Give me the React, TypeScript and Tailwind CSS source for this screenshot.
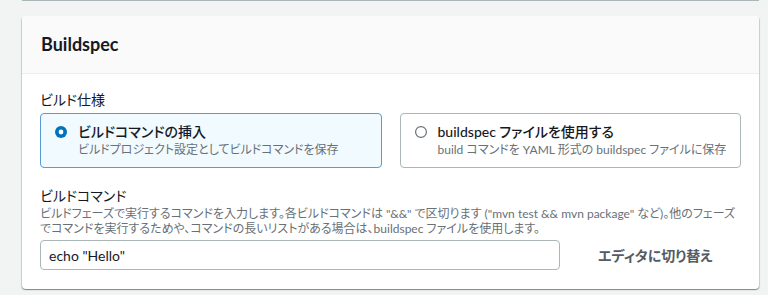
import React from 'react';

const FONT = { fontFamily: 'Lato, "Noto Sans CJK JP", sans-serif' };

interface TileProps {
  title: string;
  description: string;
  selected: boolean;
}

const RadioTile: React.FC<TileProps> = ({ title, description, selected }) => {
  return (
    <div
      className={`flex items-start gap-[11px] rounded-sm border pl-[14px] pr-3 pt-[8px] pb-[9px] ${
        selected ? 'border-[#5b9bd5] bg-[#f1faff]' : 'border-[#aab7b8] bg-white'
      }`}
    >
      <svg width="12" height="12" viewBox="0 0 12 12" className="mt-[4px] shrink-0">
        {selected ? (
          <>
            <circle cx="6" cy="6" r="6" fill="#0073bb" />
            <circle cx="6" cy="6" r="2.4" fill="#ffffff" />
          </>
        ) : (
          <circle cx="6" cy="6" r="5.4" fill="#ffffff" stroke="#687078" strokeWidth="1.2" />
        )}
      </svg>
      <div className="flex flex-col">
        <span className="text-[14px] leading-[20px] font-medium text-[#16191f] [font-feature-settings:'palt']">
          {title}
        </span>
        <span className="text-[12px] leading-[16px] text-[#687078] [font-feature-settings:'palt']">
          {description}
        </span>
      </div>
    </div>
  );
};

export default function App() {
  return (
    <div className="min-h-[295px] w-[768px] bg-[#f2f3f3]" style={FONT}>
      <div className="ml-[22px] h-px w-[737px] bg-[#aab7b8]" />
      <div className="ml-[22px] mt-[15px] w-[737px] overflow-hidden rounded-sm bg-white shadow-[0_1px_1px_0_rgba(0,28,36,0.3),1px_1px_1px_0_rgba(0,28,36,0.15),-1px_1px_1px_0_rgba(0,28,36,0.15)]">
        {/* Header */}
        <div className="flex h-[58px] items-center border-b border-[#eaeded] bg-[#fafafa] px-[19px]">
          <h2 className="text-[18px] font-bold text-[#16191f]">Buildspec</h2>
        </div>

        {/* Body */}
        <div className="px-[18px] pt-[16px] pb-[19px]">
          <div className="text-[14px] leading-[20px] text-[#16191f] [font-feature-settings:'palt']">ビルド仕様</div>
          <div className="mt-[3px] grid grid-cols-2 gap-[18px]">
            <RadioTile
              title="ビルドコマンドの挿入"
              description="ビルドプロジェクト設定としてビルドコマンドを保存"
              selected
            />
            <RadioTile
              title="buildspec ファイルを使用する"
              description="build コマンドを YAML 形式の buildspec ファイルに保存"
              selected={false}
            />
          </div>

          <div className="mt-[18px] text-[14px] leading-[20px] text-[#16191f] [font-feature-settings:'palt']">ビルドコマンド</div>
          <p className="text-[12px] leading-[15px] text-[#687078] [font-feature-settings:'palt']">
            ビルドフェーズで実行するコマンドを入力します。各ビルドコマンドは "&&" で区切ります ("mvn test && mvn package" など)。他のフェーズでコマンドを実行するためや、コマンドの長いリストがある場合は、buildspec ファイルを使用します。
          </p>
          <div className="mt-[4px] flex items-center">
            <div className="flex h-[30px] w-[520px] items-center rounded-sm border border-[#aab7b8] bg-white px-[8px] text-[14px] text-[#16191f]">
              echo "Hello"
            </div>
            <button className="ml-[38px] text-[14px] font-bold text-[#545b64] [font-feature-settings:'palt']">
              エディタに切り替え
            </button>
          </div>
        </div>
      </div>
    </div>
  );
}
